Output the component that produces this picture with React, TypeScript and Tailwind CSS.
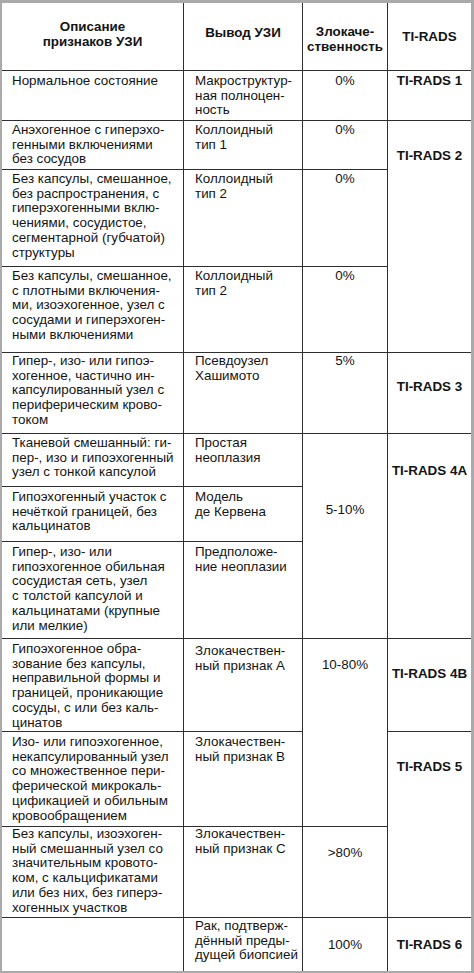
import React from 'react'

type Cell = {
  place: string
  pad: string
  lines: string[]
  kind: 'head' | 'text' | 'pct' | 'rads'
}

const line = 'border-[#2f2f2f]'

const cells: Cell[] = [
  // header
  { place: 'col-start-1 row-start-1 border-r border-b', pad: 'pb-[4px]', lines: ['Описание', 'признаков УЗИ'], kind: 'head' },
  { place: 'col-start-2 row-start-1 border-r border-b', pad: 'pb-[6px]', lines: ['Вывод УЗИ'], kind: 'head' },
  { place: 'col-start-3 row-start-1 border-r border-b', pad: 'pt-[6px]', lines: ['Злокаче-', 'ственность'], kind: 'head' },
  { place: 'col-start-4 row-start-1 border-b', pad: 'pt-[2px]', lines: ['TI-RADS'], kind: 'head' },

  // row 1
  { place: 'col-start-1 row-start-2 border-r border-b', pad: 'pt-[3px]', lines: ['Нормальное состояние'], kind: 'text' },
  { place: 'col-start-2 row-start-2 border-r border-b', pad: 'pt-[3px]', lines: ['Макроструктур-', 'ная полноцен-', 'ность'], kind: 'text' },
  { place: 'col-start-3 row-start-2 border-r border-b', pad: 'pt-[3px]', lines: ['0%'], kind: 'pct' },
  { place: 'col-start-4 row-start-2 border-b', pad: 'pt-[3px]', lines: ['TI-RADS 1'], kind: 'rads' },

  // row 2
  { place: 'col-start-1 row-start-3 border-r border-b', pad: 'pt-[2px]', lines: ['Анэхогенное с гиперэхо-', 'генными включениями', 'без сосудов'], kind: 'text' },
  { place: 'col-start-2 row-start-3 border-r border-b', pad: 'pt-[2px]', lines: ['Коллоидный', 'тип 1'], kind: 'text' },
  { place: 'col-start-3 row-start-3 border-r border-b', pad: 'pt-[2px]', lines: ['0%'], kind: 'pct' },
  { place: 'col-start-4 row-start-3 row-span-3 border-b', pad: 'pt-[28px]', lines: ['TI-RADS 2'], kind: 'rads' },

  // row 3
  { place: 'col-start-1 row-start-4 border-r border-b', pad: 'pt-[2px]', lines: ['Без капсулы, смешанное,', 'без распространения, с', 'гиперэхогенными вклю-', 'чениями, сосудистое,', 'сегментарной (губчатой)', 'структуры'], kind: 'text' },
  { place: 'col-start-2 row-start-4 border-r border-b', pad: 'pt-[2px]', lines: ['Коллоидный', 'тип 2'], kind: 'text' },
  { place: 'col-start-3 row-start-4 border-r border-b', pad: 'pt-[2px]', lines: ['0%'], kind: 'pct' },

  // row 4
  { place: 'col-start-1 row-start-5 border-r border-b', pad: 'pt-[2px]', lines: ['Без капсулы, смешанное,', 'с плотными включения-', 'ми, изоэхогенное, узел с', 'сосудами и гиперэхоген-', 'ными включениями'], kind: 'text' },
  { place: 'col-start-2 row-start-5 border-r border-b', pad: 'pt-[2px]', lines: ['Коллоидный', 'тип 2'], kind: 'text' },
  { place: 'col-start-3 row-start-5 border-r border-b', pad: 'pt-[2px]', lines: ['0%'], kind: 'pct' },

  // row 5
  { place: 'col-start-1 row-start-6 border-r border-b', pad: 'pt-[1px]', lines: ['Гипер-, изо- или гипоэ-', 'хогенное, частично ин-', 'капсулированный узел с', 'периферическим крово-', 'током'], kind: 'text' },
  { place: 'col-start-2 row-start-6 border-r border-b', pad: 'pt-[1px]', lines: ['Псевдоузел', 'Хашимото'], kind: 'text' },
  { place: 'col-start-3 row-start-6 border-r border-b', pad: 'pt-[1px]', lines: ['5%'], kind: 'pct' },
  { place: 'col-start-4 row-start-6 border-b', pad: 'pt-[27px]', lines: ['TI-RADS 3'], kind: 'rads' },

  // row 6
  { place: 'col-start-1 row-start-7 border-r border-b', pad: 'pt-[2px]', lines: ['Тканевой смешанный: ги-', 'пер-, изо и гипоэхогенный', 'узел с тонкой капсулой'], kind: 'text' },
  { place: 'col-start-2 row-start-7 border-r border-b', pad: 'pt-[2px]', lines: ['Простая', 'неоплазия'], kind: 'text' },
  { place: 'col-start-3 row-start-7 row-span-3 border-r border-b', pad: 'pt-[69px]', lines: ['5-10%'], kind: 'pct' },
  { place: 'col-start-4 row-start-7 row-span-3 border-b', pad: 'pt-[30px]', lines: ['TI-RADS 4A'], kind: 'rads' },

  // row 7
  { place: 'col-start-1 row-start-8 border-r border-b', pad: 'pt-[3px]', lines: ['Гипоэхогенный участок с', 'нечёткой границей, без', 'кальцинатов'], kind: 'text' },
  { place: 'col-start-2 row-start-8 border-r border-b', pad: 'pt-[3px]', lines: ['Модель', 'де Кервена'], kind: 'text' },

  // row 8
  { place: 'col-start-1 row-start-9 border-r border-b', pad: 'pt-[3px]', lines: ['Гипер-, изо- или', 'гипоэхогенное обильная', 'сосудистая сеть, узел', 'с толстой капсулой и', 'кальцинатами (крупные', 'или мелкие)'], kind: 'text' },
  { place: 'col-start-2 row-start-9 border-r border-b', pad: 'pt-[3px]', lines: ['Предположе-', 'ние неоплазии'], kind: 'text' },

  // row 9
  { place: 'col-start-1 row-start-10 border-r border-b', pad: 'pt-[3px]', lines: ['Гипоэхогенное обра-', 'зование без капсулы,', 'неправильной формы и', 'границей, проникающие', 'сосуды, с или без каль-', 'цинатов'], kind: 'text' },
  { place: 'col-start-2 row-start-10 border-r border-b', pad: 'pt-[5px]', lines: ['Злокачествен-', 'ный признак A'], kind: 'text' },
  { place: 'col-start-3 row-start-10 row-span-2 border-r border-b', pad: 'pt-[19px]', lines: ['10-80%'], kind: 'pct' },
  { place: 'col-start-4 row-start-10 border-b', pad: 'pt-[28px]', lines: ['TI-RADS 4B'], kind: 'rads' },

  // row 10
  { place: 'col-start-1 row-start-11 border-r border-b', pad: 'pt-[3px]', lines: ['Изо- или гипоэхогенное,', 'некапсулированный узел', 'со множественное пери-', 'ферической микрокаль-', 'цификацией и обильным', 'кровообращением'], kind: 'text' },
  { place: 'col-start-2 row-start-11 border-r border-b', pad: 'pt-[3px]', lines: ['Злокачествен-', 'ный признак B'], kind: 'text' },
  { place: 'col-start-4 row-start-11 row-span-2 border-b', pad: 'pt-[28px]', lines: ['TI-RADS 5'], kind: 'rads' },

  // row 11
  { place: 'col-start-1 row-start-12 border-r border-b', pad: 'pt-[0px]', lines: ['Без капсулы, изоэхоген-', 'ный смешанный узел со', 'значительным кровото-', 'ком, с кальцификатами', 'или без них, без гиперэ-', 'хогенных участков'], kind: 'text' },
  { place: 'col-start-2 row-start-12 border-r border-b', pad: 'pt-[0px]', lines: ['Злокачествен-', 'ный признак C'], kind: 'text' },
  { place: 'col-start-3 row-start-12 border-r border-b', pad: 'pt-[19px]', lines: ['>80%'], kind: 'pct' },

  // row 12
  { place: 'col-start-1 row-start-13 border-r', pad: 'pt-[1px]', lines: [], kind: 'text' },
  { place: 'col-start-2 row-start-13 border-r', pad: 'pt-[1px]', lines: ['Рак, подтверж-', 'дённый преды-', 'дущей биопсией'], kind: 'text' },
  { place: 'col-start-3 row-start-13 border-r', pad: 'pt-[20px]', lines: ['100%'], kind: 'pct' },
  { place: 'col-start-4 row-start-13', pad: 'pt-[20px]', lines: ['TI-RADS 6'], kind: 'rads' },
]

const kindClass = {
  head: 'flex flex-col items-center justify-center text-center font-bold',
  text: 'pl-[10px]',
  pct: 'text-center',
  rads: 'text-center font-bold',
}

export default function App() {
  return (
    <div className="h-[973px] w-[474px] bg-white">
      <div className="border-t-[3px] border-l-2 border-r-[3px] border-b-2 border-[#aaaaaa]">
        <div
          className="grid grid-cols-[182px_119px_85px_83px] grid-rows-[68px_50px_49px_97px_86px_81px_53px_55px_97px_93px_95px_91px_53px] text-[13.4px] leading-[14.7px] text-[#141414]"
          style={{ fontFamily: '"Liberation Sans", Arial, sans-serif' }}
        >
          {cells.map((c, i) => (
            <div
              key={i}
              className={`${c.place} ${line} ${c.pad} ${kindClass[c.kind]} ${c.place.includes('col-start-2') && c.kind === 'text' ? 'pl-[11px]' : ''} whitespace-nowrap`}
            >
              {c.lines.map((t, j) => (
                <div key={j}>{t}</div>
              ))}
            </div>
          ))}
        </div>
      </div>
    </div>
  )
}
